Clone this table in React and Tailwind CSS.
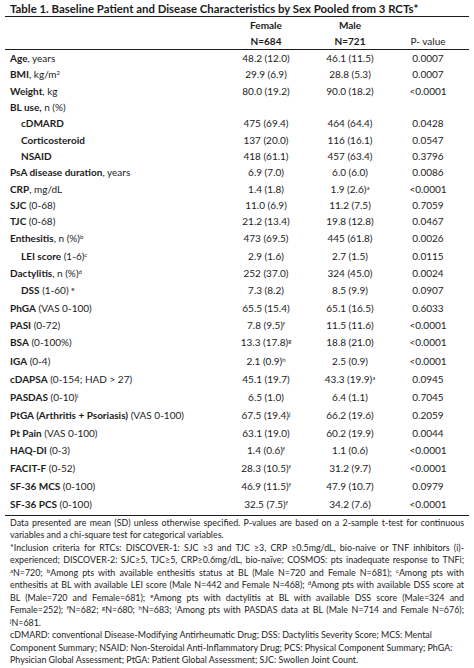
import React from 'react';

const B = ({ children }) => <span className="font-bold">{children}</span>;
const Sup = ({ children }) => <sup className="text-[6px] leading-none">{children}</sup>;

const rows = [
   { label: <><B>Age</B>, years</>, f: '48.2 (12.0)', m: '46.1 (11.5)', p: '0.0007', h: 'h-[16.3px]' },
   { label: <><B>BMI</B>, kg/m<Sup>2</Sup></>, f: '29.9 (6.9)', m: '28.8 (5.3)', p: '0.0007', h: 'h-[16.3px]' },
   { label: <><B>Weight</B>, kg</>, f: '80.0 (19.2)', m: '90.0 (18.2)', p: '<0.0001', h: 'h-[16.3px]' },
   { label: <><B>BL use,</B> n (%)</>, f: '', m: '', p: '', h: 'h-[16.3px]' },
   { label: <B>cDMARD</B>, indent: true, f: '475 (69.4)', m: '464 (64.4)', p: '0.0428', h: 'h-[16.3px]' },
   { label: <B>Corticosteroid</B>, indent: true, f: '137 (20.0)', m: '116 (16.1)', p: '0.0547', h: 'h-[16.3px]' },
   { label: <B>NSAID</B>, indent: true, f: '418 (61.1)', m: '457 (63.4)', p: '0.3796', h: 'h-[16.3px]' },
   { label: <><B>PsA disease duration</B>, years</>, f: '6.9 (7.0)', m: '6.0 (6.0)', p: '0.0086', h: 'h-[16.3px]' },
   { label: <><B>CRP</B>, mg/dL</>, f: '1.4 (1.8)', m: <>1.9 (2.6)<Sup>a</Sup></>, p: '<0.0001', h: 'h-[16.3px]' },
   { label: <><B>SJC</B> (0-68)</>, f: '11.0 (6.9)', m: '11.2 (7.5)', p: '0.7059', h: 'h-[16.3px]' },
   { label: <><B>TJC</B> (0-68)</>, f: '21.2 (13.4)', m: '19.8 (12.8)', p: '0.0467', h: 'h-[16.3px]' },
   { label: <><B>Enthesitis</B>, n (%)<Sup>b</Sup></>, f: '473 (69.5)', m: '445 (61.8)', p: '0.0026', h: 'h-[17.5px]' },
   { label: <><B>LEI score</B> (1-6)<Sup>c</Sup></>, indent: true, f: '2.9 (1.6)', m: '2.7 (1.5)', p: '0.0115', h: 'h-[17.5px]' },
   { label: <><B>Dactylitis</B>, n (%)<Sup>d</Sup></>, f: '252 (37.0)', m: '324 (45.0)', p: '0.0024', h: 'h-[17px]' },
   { label: <><B>DSS</B> (1-60) <Sup>e</Sup></>, indent: true, f: '7.3 (8.2)', m: '8.5 (9.9)', p: '0.0907', h: 'h-[18px]' },
   { label: <><B>PhGA</B> (VAS 0-100)</>, f: '65.5 (15.4)', m: '65.1 (16.5)', p: '0.6033', h: 'h-[17.5px]' },
   { label: <><B>PASI</B> (0-72)</>, f: <>7.8 (9.5)<Sup>f</Sup></>, m: '11.5 (11.6)', p: '<0.0001', h: 'h-[16.5px]' },
   { label: <><B>BSA</B> (0-100%)</>, f: <>13.3 (17.8)<Sup>g</Sup></>, m: '18.8 (21.0)', p: '<0.0001', h: 'h-[18px]' },
   { label: <><B>IGA</B> (0-4)</>, f: <>2.1 (0.9)<Sup>h</Sup></>, m: '2.5 (0.9)', p: '<0.0001', h: 'h-[18.5px]' },
   { label: <><B>cDAPSA</B> (0-154; HAD &gt; 27)</>, f: '45.1 (19.7)', m: <>43.3 (19.9)<Sup>a</Sup></>, p: '0.0945', h: 'h-[18px]' },
   { label: <><B>PASDAS</B> (0-10)<Sup>i</Sup></>, f: '6.5 (1.0)', m: '6.4 (1.1)', p: '0.7045', h: 'h-[18px]' },
   { label: <><B>PtGA (Arthritis + Psoriasis)</B> (VAS 0-100)</>, f: <>67.5 (19.4)<Sup>j</Sup></>, m: '66.2 (19.6)', p: '0.2059', h: 'h-[18.5px]' },
   { label: <><B>Pt Pain</B> (VAS 0-100)</>, f: '63.1 (19.0)', m: '60.2 (19.9)', p: '0.0044', h: 'h-[17.5px]' },
   { label: <><B>HAQ-DI</B> (0-3)</>, f: <>1.4 (0.6)<Sup>f</Sup></>, m: '1.1 (0.6)', p: '<0.0001', h: 'h-[17px]' },
   { label: <><B>FACIT-F</B> (0-52)</>, f: <>28.3 (10.5)<Sup>f</Sup></>, m: '31.2 (9.7)', p: '<0.0001', h: 'h-[18px]' },
   { label: <><B>SF-36 MCS</B> (0-100)</>, f: <>46.9 (11.5)<Sup>f</Sup></>, m: '47.9 (10.7)', p: '0.0979', h: 'h-[18px]' },
   { label: <><B>SF-36 PCS</B> (0-100)</>, f: <>32.5 (7.5)<Sup>f</Sup></>, m: '34.2 (7.6)', p: '<0.0001', h: 'h-[18px]' },
];

// footnote lines, broken where the source breaks them
const J = ({ children, last }) => (
   <div className={`whitespace-nowrap h-[12.5px] ${last ? 'text-left' : 'text-justify [text-align-last:justify]'}`}>{children}</div>
);

export default function App() {
   return (
      <div className="w-[474px] h-[668px] bg-white text-[#1c1c1c] overflow-hidden" style={{ fontFamily: 'Lato, "Open Sans", sans-serif' }}>
         <div className="h-[16px] pl-[10px] pt-[1px] text-[11.4px] leading-[15px] font-bold whitespace-nowrap">
            Table 1. Baseline Patient and Disease Characteristics by Sex Pooled from 3 RCTs*
         </div>
         <div className="mx-[5px] border-t-[1.5px] border-[#1c1c1c]">
            <div className="grid grid-cols-[219px_84px_84px_72px] text-[10px] font-bold h-[33px] border-b-[1.5px] border-[#1c1c1c]">
               <div />
               <div className="flex flex-col items-center">
                  <div className="h-[16.5px] flex items-center">Female</div>
                  <div className="h-[16.5px] flex items-center">N=684</div>
               </div>
               <div className="flex flex-col items-center">
                  <div className="h-[16.5px] flex items-center">Male</div>
                  <div className="h-[16.5px] flex items-center">N=721</div>
               </div>
               <div className="flex flex-col items-center">
                  <div className="h-[16.5px]" />
                  <div className="h-[16.5px] flex items-center font-normal">P- value</div>
               </div>
            </div>
            <div className="text-[10px] leading-none border-b-[1.5px] border-[#1c1c1c] pb-[2px]">
               {rows.map((r, i) => (
                  <div key={i} className={`grid grid-cols-[219px_84px_84px_72px] items-center ${r.h}`}>
                     <div className={`whitespace-nowrap ${r.indent ? 'pl-[16px]' : 'pl-[5px]'}`}>{r.label}</div>
                     <div className="text-center whitespace-nowrap">{r.f}</div>
                     <div className="text-center whitespace-nowrap">{r.m}</div>
                     <div className="text-center whitespace-nowrap">{r.p}</div>
                  </div>
               ))}
            </div>
         </div>
         <div className="px-[10px] text-[8.9px] leading-[12.5px] pt-[1px]">
            <J>Data presented are mean (SD) unless otherwise specified. P-values are based on a 2-sample t-test for continuous</J>
            <J last>variables and a chi-square test for categorical variables.</J>
            <J>*Inclusion criteria for RTCs: DISCOVER-1: SJC ≥3 and TJC ≥3, CRP ≥0.5mg/dL, bio-naive or TNF inhibitors (i)-</J>
            <J>experienced; DISCOVER-2: SJC≥5, TJC≥5, CRP≥0.6mg/dL, bio-naïve; COSMOS: pts inadequate response to TNFi;</J>
            <J><Sup>a</Sup>N=720; <Sup>b</Sup>Among pts with available enthesitis status at BL (Male N=720 and Female N=681); <Sup>c</Sup>Among pts with</J>
            <J>enthesitis at BL with available LEI score (Male N=442 and Female N=468); <Sup>d</Sup>Among pts with available DSS score at</J>
            <J>BL (Male=720 and Female=681); <Sup>e</Sup>Among pts with dactylitis at BL with available DSS score (Male=324 and</J>
            <J>Female=252); <Sup>f</Sup>N=682; <Sup>g</Sup>N=680; <Sup>h</Sup>N=683; <Sup>i</Sup>Among pts with PASDAS data at BL (Male N=714 and Female N=676);</J>
            <J last><Sup>j</Sup>N=681.</J>
            <J last>cDMARD: conventional Disease-Modifying Antirheumatic Drug; DSS: Dactylitis Severity Score; MCS: Mental</J>
            <J last>Component Summary; NSAID: Non-Steroidal Anti-Inflammatory Drug; PCS: Physical Component Summary; PhGA:</J>
            <J last>Physician Global Assessment; PtGA: Patient Global Assessment; SJC: Swollen Joint Count.</J>
         </div>
      </div>
   );
}
